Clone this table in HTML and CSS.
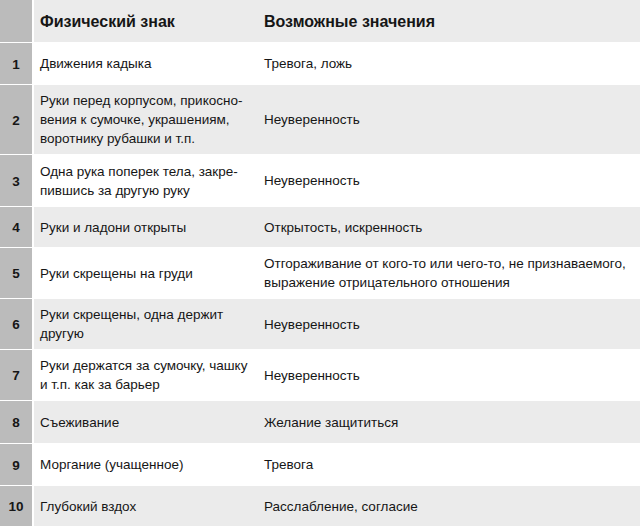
FILE: index.html
```html
<!DOCTYPE html>
<html lang="ru">
<head>
<meta charset="utf-8">
<title>Физические знаки</title>
<link rel="stylesheet" href="styles.css">
</head>
<body>
<div class="table">
  <div class="row head h42">
    <div class="num"></div>
    <div class="body"><div>Физический знак</div><div>Возможные значения</div></div>
  </div>
  <div class="row h41">
    <div class="num">1</div>
    <div class="body"><div>Движения кадыка</div><div>Тревога, ложь</div></div>
  </div>
  <div class="row alt h69">
    <div class="num">2</div>
    <div class="body"><div>Руки перед корпусом, прикосно-<br>вения к сумочке, украшениям,<br>воротнику рубашки и т.п.</div><div>Неуверенность</div></div>
  </div>
  <div class="row h51">
    <div class="num">3</div>
    <div class="body"><div>Одна рука поперек тела, закре-<br>пившись за другую руку</div><div>Неуверенность</div></div>
  </div>
  <div class="row alt h40">
    <div class="num">4</div>
    <div class="body"><div>Руки и ладони открыты</div><div>Открытость, искренность</div></div>
  </div>
  <div class="row h50">
    <div class="num">5</div>
    <div class="body"><div>Руки скрещены на груди</div><div>Отгораживание от кого-то или чего-то, не признаваемого,<br>выражение отрицательного отношения</div></div>
  </div>
  <div class="row alt h50">
    <div class="num">6</div>
    <div class="body"><div>Руки скрещены, одна держит<br>другую</div><div>Неуверенность</div></div>
  </div>
  <div class="row h50">
    <div class="num">7</div>
    <div class="body"><div>Руки держатся за сумочку, чашку<br>и т.п. как за барьер</div><div>Неуверенность</div></div>
  </div>
  <div class="row alt h42">
    <div class="num">8</div>
    <div class="body"><div>Съеживание</div><div>Желание защититься</div></div>
  </div>
  <div class="row h41">
    <div class="num">9</div>
    <div class="body"><div>Моргание (учащенное)</div><div>Тревога</div></div>
  </div>
  <div class="row alt h40">
    <div class="num">10</div>
    <div class="body"><div>Глубокий вздох</div><div>Расслабление, согласие</div></div>
  </div>
</div>
</body>
</html>
```
FILE: styles.css
```css
html, body {
  margin: 0;
  padding: 0;
  background: #ffffff;
}
body {
  font-family: "Liberation Sans", Arial, sans-serif;
  font-size: 13.5px;
  line-height: 19px;
  color: #161616;
}
.table {
  display: flex;
  flex-direction: column;
  gap: 1px;
  width: 640px;
}
.row {
  display: flex;
  gap: 2px;
}
.num {
  width: 32px;
  flex: none;
  background: #bbbbbb;
  font-weight: bold;
  display: flex;
  align-items: center;
  justify-content: center;
  padding-top: 1px;
  box-sizing: border-box;
}
.body {
  flex: 1;
  display: grid;
  grid-template-columns: 224px 1fr;
  align-items: center;
  padding-left: 6px;
  background: #ffffff;
}
.alt .body,
.head .body {
  background: #ebebeb;
}
.head .body {
  font-weight: bold;
  font-size: 16px;
}
.h40 { height: 40px; }
.h41 { height: 41px; }
.h42 { height: 42px; }
.h50 { height: 50px; }
.h51 { height: 51px; }
.h69 { height: 69px; }
```
